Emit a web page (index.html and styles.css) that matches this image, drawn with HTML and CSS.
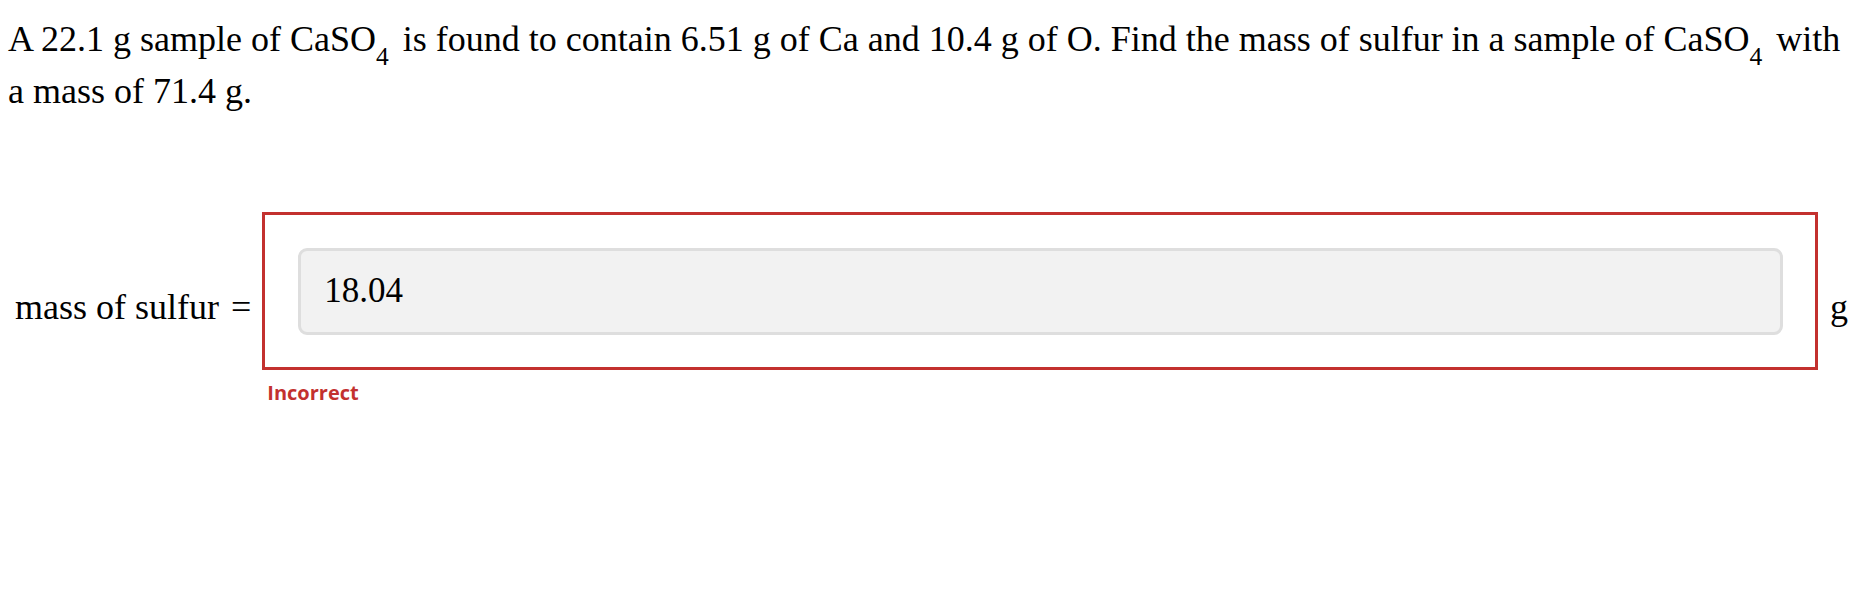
FILE: index.html
```html
<!DOCTYPE html>
<html lang="en">
<head>
<meta charset="utf-8">
<title>Mass of sulfur</title>
<link rel="stylesheet" href="styles.css">
</head>
<body>
<main class="question">
  <p class="prompt">A 22.1 g sample of CaSO<sub class="chem-sub">4</sub> is found to contain 6.51 g of Ca and 10.4 g of O. Find the mass of sulfur in a sample of CaSO<sub class="chem-sub">4</sub> with a mass of 71.4 g.</p>
  <div class="answer-row">
    <span class="answer-label">mass of sulfur <span class="eq">=</span></span>
    <div class="answer-field">
      <div class="field-box is-incorrect">
        <input class="answer-input" type="text" value="18.04" readonly>
      </div>
      <div class="feedback">Incorrect</div>
    </div>
    <span class="answer-unit">g</span>
  </div>
</main>
</body>
</html>
```

FILE: styles.css
```css
html, body {
  margin: 0;
  padding: 0;
  background: #ffffff;
}

body {
  font-family: "Liberation Serif", "Times New Roman", serif;
  color: #000000;
}

.question {
  padding: 13px 8px 0 8px;
}

.prompt {
  margin: 0;
  font-size: 36px;
  line-height: 52px;
}

.chem-sub {
  font-size: 25.5px;
  line-height: 0;
  vertical-align: -14px;
  margin-right: 5px;
}

.answer-row {
  display: flex;
  align-items: flex-start;
  margin-top: 95px;
}

.answer-label,
.answer-unit {
  font-size: 36px;
  line-height: 40px;
  margin-top: 75px;
  white-space: nowrap;
}

.answer-label {
  margin-left: 7px;
  margin-right: 11px;
}

.eq {
  margin-left: 3px;
}

.answer-unit {
  margin-left: 12px;
}

.answer-field {
  flex: 1;
  display: flex;
  flex-direction: column;
}

.field-box {
  border: 3px solid #c3312f;
  padding: 33px 32px 32px 33px;
}

.answer-input {
  display: block;
  box-sizing: border-box;
  width: 100%;
  height: 87px;
  margin: 0;
  padding: 0 22px 1px 23px;
  border: 3px solid #dedede;
  border-radius: 9px;
  background: #f2f2f2;
  font-family: "Liberation Serif", "Times New Roman", serif;
  font-size: 35px;
  color: #000000;
  outline: none;
}

.feedback {
  margin-top: 9px;
  margin-left: 5px;
  font-family: "Open Sans", "Noto Sans", sans-serif;
  font-weight: 700;
  font-size: 20px;
  color: #c3312f;
}
```
